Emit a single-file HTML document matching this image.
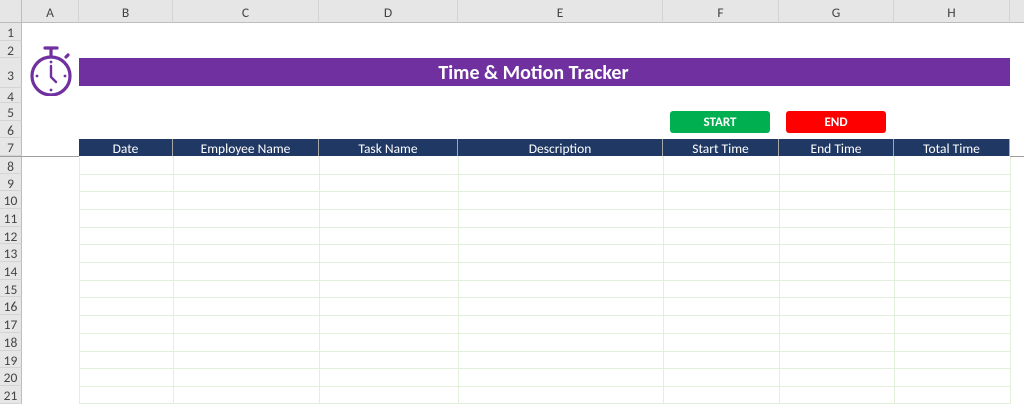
<!DOCTYPE html>
<html><head><meta charset="utf-8"><style>
*{margin:0;padding:0;box-sizing:border-box}
body{width:1024px;height:404px;overflow:hidden;background:#fff;font-family:Calibri,"Liberation Sans",sans-serif;position:relative}
.a{position:absolute}
.ch{top:0;height:23px;background:#e6e6e6;border-right:1px solid #d4d4d4;border-bottom:1px solid #bdbdbd;font-size:13.5px;color:#444;text-align:center;line-height:25px}
.rh{left:0;width:22px;background:#e6e6e6;border-bottom:1px solid #d4d4d4;border-right:1px solid #bdbdbd;font-size:13.5px;color:#444;text-align:center}
.th{top:139px;height:17px;background:#203864;color:#fff;font-size:13.5px;text-align:center;line-height:19px;border-right:1px solid #a6a6a6}
.hl{left:79px;width:931px;height:1px;background:#e2efda}
.vl{top:156px;width:1px;height:248px;background:#e2efda}
.btn{top:111px;height:22px;width:100px;border-radius:3px;color:#fff;font-weight:bold;font-size:13px;text-align:center;line-height:24px}
</style></head><body>
<div class="a" style="left:0;top:0;width:22px;height:23px;background:#e6e6e6;border-right:1px solid #bdbdbd;border-bottom:1px solid #bdbdbd"></div>
<div class="a ch" style="left:22px;width:57px">A</div>
<div class="a ch" style="left:79px;width:94px">B</div>
<div class="a ch" style="left:173px;width:146px">C</div>
<div class="a ch" style="left:319px;width:139px">D</div>
<div class="a ch" style="left:458px;width:205px">E</div>
<div class="a ch" style="left:663px;width:116px">F</div>
<div class="a ch" style="left:779px;width:115px">G</div>
<div class="a ch" style="left:894px;width:116px">H</div>
<div class="a ch" style="left:1010px;width:14px;border-right:none"></div>
<div class="a rh" style="top:23px;height:18px;line-height:20px">1</div>
<div class="a rh" style="top:41px;height:17px;line-height:19px">2</div>
<div class="a rh" style="top:58px;height:30px;line-height:36px">3</div>
<div class="a rh" style="top:88px;height:15px;line-height:17px">4</div>
<div class="a rh" style="top:103px;height:18px;line-height:20px">5</div>
<div class="a rh" style="top:121px;height:17px;line-height:19px">6</div>
<div class="a rh" style="top:138px;height:18px;line-height:20px">7</div>
<div class="a rh" style="top:157px;height:17px;line-height:19px">8</div>
<div class="a rh" style="top:174px;height:17px;line-height:19px">9</div>
<div class="a rh" style="top:191px;height:18px;line-height:20px">10</div>
<div class="a rh" style="top:209px;height:18px;line-height:20px">11</div>
<div class="a rh" style="top:227px;height:17px;line-height:19px">12</div>
<div class="a rh" style="top:244px;height:18px;line-height:20px">13</div>
<div class="a rh" style="top:262px;height:18px;line-height:20px">14</div>
<div class="a rh" style="top:280px;height:17px;line-height:19px">15</div>
<div class="a rh" style="top:297px;height:18px;line-height:20px">16</div>
<div class="a rh" style="top:315px;height:18px;line-height:20px">17</div>
<div class="a rh" style="top:333px;height:18px;line-height:20px">18</div>
<div class="a rh" style="top:351px;height:17px;line-height:19px">19</div>
<div class="a rh" style="top:368px;height:18px;line-height:20px">20</div>
<div class="a rh" style="top:386px;height:18px;line-height:20px">21</div>

<svg class="a" style="left:26px;top:44px" width="50" height="52" viewBox="0 0 50 52">
<g stroke="#7030a0" fill="none" stroke-width="3.2" stroke-linecap="round">
<circle cx="25" cy="32" r="19"/>
<line x1="19" y1="4" x2="31" y2="4"/>
<line x1="25" y1="4" x2="25" y2="12"/>
<line x1="40" y1="13" x2="42" y2="11"/>
<polyline points="25,22 25,33 30,38" stroke-width="2.4"/>
</g>
<g fill="#7030a0"><circle cx="25" cy="18" r="1.4"/><circle cx="25" cy="46" r="1.4"/><circle cx="11" cy="32" r="1.4"/><circle cx="39" cy="32" r="1.4"/></g>
</svg>

<div class="a" style="left:79px;top:58px;width:931px;height:28px;background:#7030a0;color:#fff;font-weight:bold;font-size:20px;text-align:center;line-height:31px;padding-right:22px">Time &amp; Motion Tracker</div>

<div class="a btn" style="left:670px;background:#00b050">START</div>
<div class="a btn" style="left:786px;background:#ff0000">END</div>

<div class="a th" style="left:79px;width:94px">Date</div>
<div class="a th" style="left:173px;width:146px">Employee Name</div>
<div class="a th" style="left:319px;width:139px">Task Name</div>
<div class="a th" style="left:458px;width:205px">Description</div>
<div class="a th" style="left:663px;width:116px">Start Time</div>
<div class="a th" style="left:779px;width:115px">End Time</div>
<div class="a th" style="left:894px;width:116px">Total Time</div>

<div class="a hl" style="top:174px"></div><div class="a hl" style="top:191px"></div><div class="a hl" style="top:209px"></div><div class="a hl" style="top:227px"></div><div class="a hl" style="top:244px"></div><div class="a hl" style="top:262px"></div><div class="a hl" style="top:280px"></div><div class="a hl" style="top:297px"></div><div class="a hl" style="top:315px"></div><div class="a hl" style="top:333px"></div><div class="a hl" style="top:351px"></div><div class="a hl" style="top:368px"></div><div class="a hl" style="top:386px"></div><div class="a hl" style="top:403px"></div>
<div class="a vl" style="left:79px"></div><div class="a vl" style="left:173px"></div><div class="a vl" style="left:319px"></div><div class="a vl" style="left:458px"></div><div class="a vl" style="left:663px"></div><div class="a vl" style="left:779px"></div><div class="a vl" style="left:894px"></div><div class="a vl" style="left:1010px"></div>

<div class="a" style="left:0;top:156px;width:79px;height:1px;background:#9e9e9e"></div>
<div class="a" style="left:1010px;top:156px;width:14px;height:1px;background:#9e9e9e"></div>
</body></html>
